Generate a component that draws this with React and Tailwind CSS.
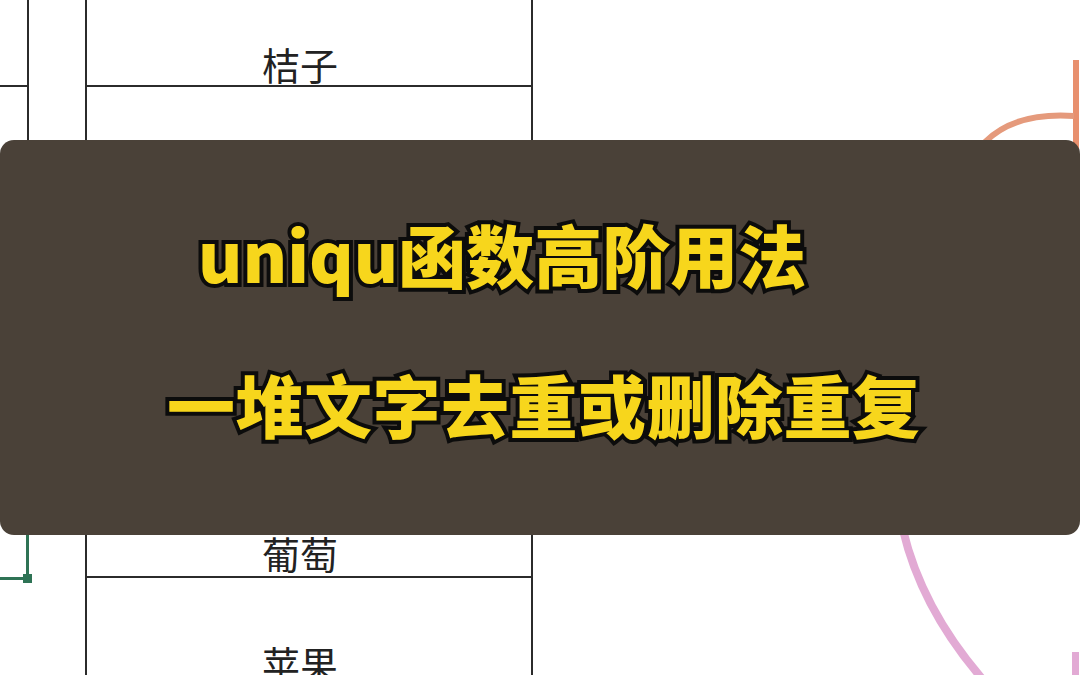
const cellFont = { fontFamily: '"Noto Sans CJK SC", "Noto Sans", sans-serif' };

const Cell = ({ h, text, pb = "pb-[2px]", border = true }) => (
  <div
    className={`shrink-0 flex items-end justify-center pr-[18px] ${h} ${pb} ${
      border ? "border-b-2 border-[#2b2b2b]" : ""
    }`}
  >
    {text && (
      <span className="text-[38px] leading-none text-[#222]" style={cellFont}>
        {text}
      </span>
    )}
  </div>
);

const Title = ({ children, className }) => (
  <div
    className={`text-[68px] leading-none font-black text-[#f7d61c] whitespace-nowrap [-webkit-text-stroke:8px_#0c0c0c] [paint-order:stroke_fill] font-['Noto_Sans_CJK_SC',_'Noto_Sans',_sans-serif] ${className}`}
  >
    {children}
  </div>
);

export default function App() {
  return (
    <div className="relative w-[1080px] h-[675px] overflow-hidden bg-white flex">
      {/* column A */}
      <div className="w-[29px] shrink-0 flex flex-col">
        <div className="shrink-0 h-[87px] border-r-2 border-b-2 border-[#2b2b2b]" />
        <div className="shrink-0 h-[393px] border-r-2 border-[#2b2b2b]" />
        <div className="relative shrink-0 h-[100px] border-r-[3px] border-b-[3px] border-[#2e7355]">
          <div className="absolute -right-[6px] -bottom-[6px] w-[9px] h-[9px] bg-[#2e7355]" />
        </div>
        <div className="flex-1" />
      </div>

      {/* column B */}
      <div className="w-[58px] shrink-0 border-r-2 border-[#2b2b2b]" />

      {/* column C */}
      <div className="w-[446px] shrink-0 border-r-2 border-[#2b2b2b] flex flex-col">
        <Cell h="h-[87px]" text="桔子" />
        <Cell h="h-[92px]" text="橙子" />
        <Cell h="h-[307px]" />
        <Cell h="h-[92px]" text="葡萄" pb="pb-[4px]" />
        <Cell h="h-[104px]" text="苹果" pb="pb-[0px]" border={false} />
      </div>

      {/* chart area on the right */}
      <div className="relative flex-1">
        <svg
          className="absolute inset-0"
          width="546"
          height="675"
          viewBox="533 0 546 675"
        >
          <rect x="1073" y="60" width="8" height="90" fill="#e8906e" />
          <path
            d="M985 142 Q1015 112 1074 116"
            fill="none"
            stroke="#e59a7c"
            strokeWidth="6"
          />
          <path
            d="M903 530 Q922 610 985 682"
            fill="none"
            stroke="#e2aad4"
            strokeWidth="8"
          />
          <rect x="1072" y="652" width="8" height="23" fill="#e2aad4" />
        </svg>
      </div>

      {/* caption overlay */}
      <div className="absolute left-0 top-[140px] w-[1080px] h-[395px] rounded-[14px] bg-[#4a4138] flex flex-col">
        <Title className="mt-[80px] pl-[198px]">uniqu函数高阶用法</Title>
        <Title className="mt-[82px] pl-[167px] tracking-[0.5px]">一堆文字去重或删除重复</Title>
      </div>
    </div>
  );
}
